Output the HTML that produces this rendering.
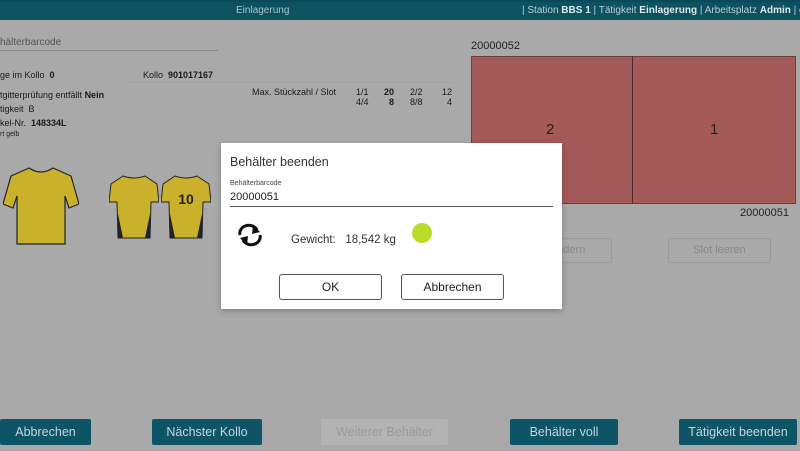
<!DOCTYPE html>
<html><head><meta charset="utf-8"><style>
*{margin:0;padding:0;box-sizing:border-box}
body{width:800px;height:451px;overflow:hidden;background:#a9a9a9;font-family:"Liberation Sans",sans-serif;color:#222;position:relative}
.a{position:absolute;white-space:nowrap}
.hdr{left:0;top:0;width:800px;height:20px;background:#0c5260;border-top:2px solid #0a4957;color:#a9c3c8;font-size:10px}
.btn{position:absolute;top:419px;height:26px;background:#0c5466;color:#c8d6da;font-size:12.5px;text-align:center;line-height:26px;border-radius:2px}
.s{font-size:9px;color:#1a1a1a}
b{font-weight:bold}
</style></head><body>
<div class="a hdr">
 <span class="a" style="left:236px;top:3px">Einlagerung</span>
 <span class="a" style="left:522px;top:3px;color:#b8cfd3">| Station <b style="color:#e0e8ea">BBS 1</b> | Tätigkeit <b style="color:#e0e8ea">Einlagerung</b> | Arbeitsplatz <b style="color:#e0e8ea">Admin</b> | ea</span>
</div>
<div class="a" style="left:0;top:37px;font-size:10px;color:#555">hälterbarcode</div>
<div class="a" style="left:0;top:50px;width:218px;border-top:1px solid #888"></div>
<div class="a s" style="left:0;top:70px">ge im Kollo &nbsp;<b>0</b></div>
<div class="a s" style="left:143px;top:70px">Kollo &nbsp;<b>901017167</b></div>
<div class="a" style="left:128px;top:82px;width:325px;border-top:1px solid #a0a0a0"></div>
<div class="a s" style="left:0;top:90px">tgitterprüfung entfällt <b>Nein</b></div>
<div class="a s" style="left:0;top:104px">tigkeit &nbsp;B</div>
<div class="a s" style="left:0;top:118px">kel-Nr. &nbsp;<b>148334L</b></div>
<div class="a" style="left:0;top:131px;font-size:7px">rt gelb</div>
<div class="a s" style="left:252px;top:87px">Max. Stückzahl / Slot</div>
<div class="a s" style="left:356px;top:87px;line-height:10px">1/1<br>4/4</div>
<div class="a s" style="left:384px;top:87px;line-height:10px;text-align:right"><b>20</b><br><b>8</b></div>
<div class="a s" style="left:410px;top:87px;line-height:10px">2/2<br>8/8</div>
<div class="a s" style="left:442px;top:87px;line-height:10px;text-align:right">12<br>4</div>
<svg class="a" style="left:3px;top:166px" width="76" height="80" viewBox="0 0 76 80"><path d="M26 2 L8 10 L0 38 L10 42 L14 30 L14 78 L62 78 L62 30 L66 42 L76 38 L68 10 L50 2 Q38 10 26 2Z" fill="#c9b12b" stroke="#222" stroke-width="1.2"/></svg>
<svg class="a" style="left:109px;top:174px" width="50" height="66" viewBox="0 0 50 66"><path d="M14 2 L2 10 L0 28 L8 28 L9 64 L41 64 L42 28 L50 28 L48 10 L36 2 Q25 6 14 2Z" fill="#c9b12b" stroke="#222"/><path d="M9 40 L14 64 L9 64Z M41 40 L36 64 L41 64Z" fill="#222"/></svg>
<svg class="a" style="left:161px;top:174px" width="50" height="66" viewBox="0 0 50 66"><path d="M14 2 L2 10 L0 28 L8 28 L9 64 L41 64 L42 28 L50 28 L48 10 L36 2 Q25 6 14 2Z" fill="#c9b12b" stroke="#222"/><path d="M9 40 L14 64 L9 64Z M41 40 L36 64 L41 64Z" fill="#222"/><text x="25" y="30" font-size="14" font-weight="bold" text-anchor="middle" fill="#222" font-family="Liberation Sans">10</text></svg>
<div class="a" style="left:471px;top:40px;font-size:11px">20000052</div>
<div class="a" style="left:471px;top:56px;width:325px;height:148px;background:#a45a58;border:1px solid #6e3c3a"></div>
<div class="a" style="left:632px;top:56px;width:1px;height:148px;background:#4a2a2a"></div>
<div class="a" style="left:546px;top:121px;font-size:15px">2</div>
<div class="a" style="left:710px;top:121px;font-size:15px">1</div>
<div class="a" style="left:740px;top:207px;font-size:11px">20000051</div>
<div class="a" style="left:540px;top:238px;width:72px;height:25px;border:1px solid #999;border-radius:2px;color:#888;font-size:11px;line-height:23px;padding-left:10px">ändern</div>
<div class="a" style="left:668px;top:238px;width:103px;height:25px;border:1px solid #999;border-radius:2px;color:#888;font-size:11px;line-height:23px;text-align:center">Slot leeren</div>
<div class="btn" style="left:0;width:91px">Abbrechen</div>
<div class="btn" style="left:152px;width:110px">Nächster Kollo</div>
<div class="btn" style="left:321px;width:127px;background:#b3b3b3;color:#999">Weiterer Behälter</div>
<div class="btn" style="left:510px;width:108px">Behälter voll</div>
<div class="btn" style="left:679px;width:118px">Tätigkeit beenden</div>
<div class="a" style="left:221px;top:143px;width:341px;height:166px;background:#fff;box-shadow:0 2px 6px rgba(0,0,0,.25)">
 <div class="a" style="left:9px;top:12px;font-size:12.5px;color:#333">Behälter beenden</div>
 <div class="a" style="left:9px;top:37px;font-size:7px;color:#444">Behälterbarcode</div>
 <div class="a" style="left:9px;top:48px;font-size:11px;color:#222">20000051</div>
 <div class="a" style="left:9px;top:63px;width:323px;border-top:1.5px solid #555"></div>
 <svg class="a" style="left:14px;top:80px" width="30" height="24" viewBox="0 0 30 24"><path d="M5 12 A9 8 0 0 1 22 7" fill="none" stroke="#111" stroke-width="3"/><path d="M18 2 L25 9 L17 11Z" fill="#111"/><path d="M25 12 A9 8 0 0 1 8 17" fill="none" stroke="#111" stroke-width="3"/><path d="M12 22 L5 15 L13 13Z" fill="#111"/></svg>
 <div class="a" style="left:70px;top:91px;font-size:11.5px;color:#333">Gewicht: &nbsp; 18,542 kg</div>
 <div class="a" style="left:191px;top:80px;width:20px;height:20px;border-radius:50%;background:#b8dc2a"></div>
 <div class="a" style="left:58px;top:131px;width:103px;height:26px;border:1px solid #555;border-radius:3px;font-size:12px;text-align:center;line-height:24px">OK</div>
 <div class="a" style="left:180px;top:131px;width:103px;height:26px;border:1px solid #555;border-radius:3px;font-size:12px;text-align:center;line-height:24px">Abbrechen</div>
</div>
</body></html>
